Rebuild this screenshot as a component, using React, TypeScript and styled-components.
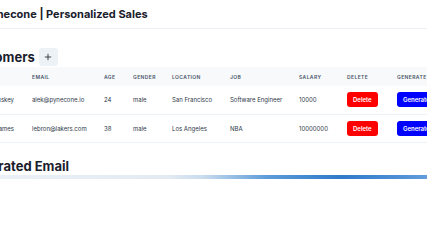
import React from 'react';
import styled, { createGlobalStyle } from 'styled-components';

const GlobalStyle = createGlobalStyle`
  html, body {
    margin: 0;
    padding: 0;
    background: #ffffff;
    overflow: hidden;
  }
  body {
    font-family: 'Inter', 'Noto Sans', sans-serif;
    color: #1a202c;
  }
`;

const Page = styled.div`
  width: 560px;
  margin-left: -52px;
  display: flex;
  flex-direction: column;
`;

const TopBar = styled.div`
  height: 28px;
  display: flex;
  align-items: center;
  padding-left: 35px;
  border-bottom: 1px solid #edf0f4;
`;

const Title = styled.h1`
  margin: 0;
  font-size: 11px;
  font-weight: 700;
  color: #1a202c;
`;

const Section = styled.div`
  display: flex;
  flex-direction: column;
`;

const SectionHead = styled.div<{ $top: number }>`
  display: flex;
  align-items: center;
  gap: 4px;
  padding-left: 17px;
  padding-top: ${(p) => p.$top}px;
`;

const Heading = styled.h2`
  margin: 0;
  font-size: 13px;
  line-height: 18px;
  font-weight: 700;
  color: #1a202c;
`;

const AddButton = styled.button`
  width: 19px;
  height: 18px;
  border: none;
  border-radius: 3px;
  background: #edf2f7;
  display: flex;
  align-items: center;
  justify-content: center;
  padding: 0;
`;

const Table = styled.table`
  margin-top: 1px;
  border-collapse: collapse;
  table-layout: fixed;
  width: 560px;
`;

const HeadRow = styled.tr`
  background: #f7f9fb;
`;

const Th = styled.th<{ $w: number }>`
  box-sizing: border-box;
  width: ${(p) => p.$w}px;
  height: 19px;
  padding: 0 0 0 12px;
  text-align: left;
  font-size: 5px;
  font-weight: 600;
  letter-spacing: 0.4px;
  text-transform: uppercase;
  color: #4a5568;
  white-space: nowrap;
  overflow: hidden;
`;

const Tr = styled.tr`
  border-bottom: 1px solid #edf2f7;
`;

const Td = styled.td`
  box-sizing: border-box;
  height: 28px;
  padding: 0 0 0 12px;
  font-size: 6px;
  color: #2d3748;
  white-space: nowrap;
  overflow: hidden;
`;

const NameTd = styled(Td)`
  text-align: right;
  padding: 0 6px 0 0;
`;

const ActionButton = styled.button<{ $bg: string }>`
  height: 15px;
  padding: 0 6px;
  border: none;
  border-radius: 3px;
  background: ${(p) => p.$bg};
  color: #ffffff;
  font-family: 'Inter', sans-serif;
  font-size: 6px;
  font-weight: 600;
  white-space: nowrap;
`;

const Progress = styled.div`
  height: 4px;
  background: linear-gradient(
    90deg,
    #edf2f7 0px,
    #e3eaf2 220px,
    #c9dbee 255px,
    #5b9bd9 320px,
    #2f7bc9 392px,
    #4d8fd6 450px,
    #7fb0e3 520px
  );
`;

const columns = [
  { label: 'Name', w: 72 },
  { label: 'Email', w: 72 },
  { label: 'Age', w: 29 },
  { label: 'Gender', w: 39 },
  { label: 'Location', w: 58 },
  { label: 'Job', w: 69 },
  { label: 'Salary', w: 48 },
  { label: 'Delete', w: 50 },
  { label: 'Generate Email', w: 123 },
];

const customers = [
  {
    name: 'Alek Petuskey',
    email: 'alek@pynecone.io',
    age: 24,
    gender: 'male',
    location: 'San Francisco',
    job: 'Software Engineer',
    salary: 10000,
  },
  {
    name: 'LeBron James',
    email: 'lebron@lakers.com',
    age: 38,
    gender: 'male',
    location: 'Los Angeles',
    job: 'NBA',
    salary: 10000000,
  },
];

export default function App() {
  return (
    <>
      <GlobalStyle />
      <Page>
        <TopBar>
          <Title>Pynecone | Personalized Sales</Title>
        </TopBar>
        <Section>
          <SectionHead $top={19}>
            <Heading>Customers</Heading>
            <AddButton>
              <svg width="8" height="8" viewBox="0 0 10 10">
                <path d="M5 1v8M1 5h8" stroke="#1a202c" strokeWidth="1" />
              </svg>
            </AddButton>
          </SectionHead>
          <Table>
            <thead>
              <HeadRow>
                {columns.map((c) => (
                  <Th key={c.label} $w={c.w}>
                    {c.label}
                  </Th>
                ))}
              </HeadRow>
            </thead>
            <tbody>
              {customers.map((c) => (
                <Tr key={c.email}>
                  <NameTd>{c.name}</NameTd>
                  <Td>{c.email}</Td>
                  <Td>{c.age}</Td>
                  <Td>{c.gender}</Td>
                  <Td>{c.location}</Td>
                  <Td>{c.job}</Td>
                  <Td>{c.salary}</Td>
                  <Td>
                    <ActionButton $bg="#ff0000">Delete</ActionButton>
                  </Td>
                  <Td>
                    <ActionButton $bg="#0000ff">Generate Email</ActionButton>
                  </Td>
                </Tr>
              ))}
            </tbody>
          </Table>
        </Section>
        <Section>
          <SectionHead $top={14}>
            <Heading>Generated Email</Heading>
          </SectionHead>
          <Progress />
        </Section>
      </Page>
    </>
  );
}
